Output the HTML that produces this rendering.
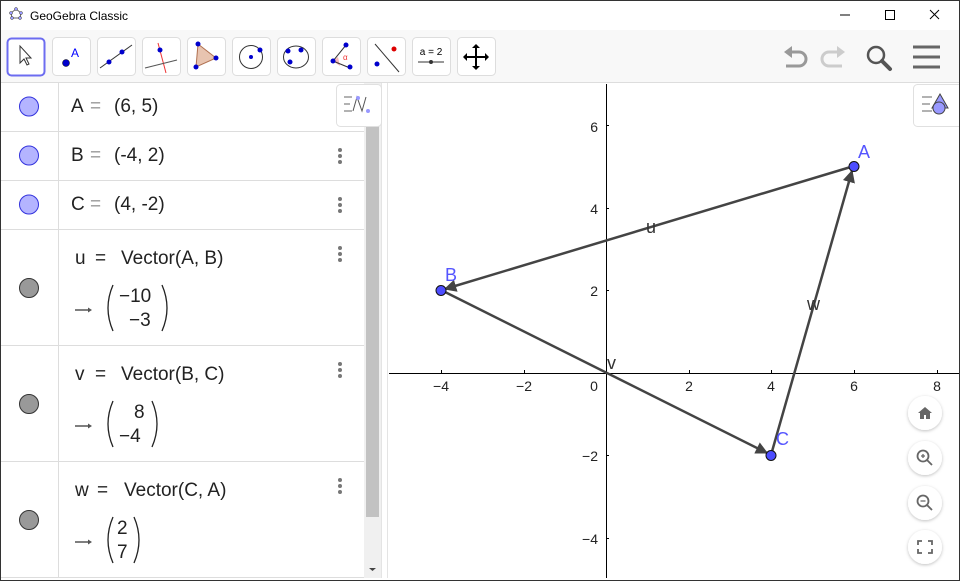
<!DOCTYPE html>
<html><head><meta charset="utf-8"><style>
body{margin:0;width:960px;height:581px;overflow:hidden;background:#fff;font-family:"Liberation Sans",sans-serif}
svg{display:block}
</style></head><body>
<svg width="960" height="581" viewBox="0 0 960 581" font-family="Liberation Sans, sans-serif">
<defs>
<marker id="ar" viewBox="0 0 10 10" refX="9" refY="5" markerWidth="5" markerHeight="5" orient="auto"><path d="M0 0L10 5L0 10z" fill="#444"/></marker>
<filter id="sh" x="-30%" y="-30%" width="160%" height="160%"><feDropShadow dx="0" dy="1" stdDeviation="1.5" flood-opacity="0.25"/></filter>
</defs>
<rect x="0" y="0" width="960" height="30" fill="#fff"/>
<path d="M11 13l5-4 5 4-1 5h-8z" fill="none" stroke="#666" stroke-width="1"/>
<g fill="#99f" stroke="#333" stroke-width=".5"><circle cx="11" cy="13" r="1.5"/><circle cx="16" cy="9" r="1.5"/><circle cx="21" cy="13" r="1.5"/><circle cx="20" cy="18" r="1.5"/><circle cx="12" cy="18" r="1.5"/></g>
<text x="30" y="20" font-size="12" fill="#000">GeoGebra Classic</text>
<path d="M840 15h10" stroke="#000"/>
<rect x="885.5" y="10.5" width="9" height="9" fill="none" stroke="#000"/>
<path d="M930 10l9 9M939 10l-9 9" stroke="#000"/>
<rect x="1" y="30" width="958" height="52" fill="#f8f8f8"/>
<path d="M0 82.5h960" stroke="#ddd"/>
<g fill="#fff" stroke="#ddd">
<rect x="52.5" y="37.5" width="38" height="38" rx="4"/><rect x="97.5" y="37.5" width="38" height="38" rx="4"/><rect x="142.5" y="37.5" width="38" height="38" rx="4"/><rect x="187.5" y="37.5" width="38" height="38" rx="4"/><rect x="232.5" y="37.5" width="38" height="38" rx="4"/><rect x="277.5" y="37.5" width="38" height="38" rx="4"/><rect x="322.5" y="37.5" width="38" height="38" rx="4"/><rect x="367.5" y="37.5" width="38" height="38" rx="4"/><rect x="412.5" y="37.5" width="38" height="38" rx="4"/><rect x="457.5" y="37.5" width="38" height="38" rx="4"/>
</g>
<rect x="7.5" y="38.5" width="37" height="37" rx="4" fill="#fff" stroke="#6c6cf0" stroke-width="2"/>
<path d="M20 46v17l4-4 3 6 2-1-3-6h5z" fill="#fff" stroke="#333"/>
<circle cx="66" cy="63" r="3.5" fill="#00c" stroke="#000" stroke-width=".5"/><text x="71" y="57" font-size="12" fill="#00f">A</text>
<path d="M100 68l32-23" stroke="#333"/><circle cx="109" cy="62" r="2.5" fill="#00c"/><circle cx="122" cy="52" r="2.5" fill="#00c"/>
<path d="M158 43l8 30" stroke="#e33"/><path d="M145 68l32-8" stroke="#555"/><circle cx="160" cy="50" r="2.5" fill="#00c"/>
<path d="M198 44l18 14-20 9z" fill="#e8c4b0" stroke="#b07050"/><circle cx="198" cy="44" r="2.5" fill="#00c"/><circle cx="216" cy="58" r="2.5" fill="#00c"/><circle cx="196" cy="67" r="2.5" fill="#00c"/>
<circle cx="251" cy="57" r="11.5" fill="none" stroke="#333"/><circle cx="251" cy="57" r="2" fill="#00c"/><circle cx="260" cy="50" r="2.5" fill="#00c"/>
<ellipse cx="296" cy="57" rx="12.5" ry="11" fill="none" stroke="#333"/><circle cx="288" cy="51" r="2.5" fill="#00c"/><circle cx="301" cy="50" r="2.5" fill="#00c"/><circle cx="290" cy="62" r="2.5" fill="#00c"/>
<path d="M333 61l7 5-2-9z" fill="#f8b8b8"/><path d="M346 45l-13 16 17 7" fill="none" stroke="#333"/><circle cx="346" cy="45" r="2.5" fill="#00c"/><circle cx="333" cy="61" r="2.5" fill="#00c"/><circle cx="350" cy="67" r="2.5" fill="#00c"/><text x="343" y="60" font-size="8" fill="#e33">α</text>
<path d="M375 44l24 28" stroke="#333"/><circle cx="394" cy="49" r="2.5" fill="#d00"/><circle cx="377" cy="64" r="2.5" fill="#00c"/>
<text x="431" y="55" font-size="10" text-anchor="middle" fill="#000">a = 2</text><path d="M418 62h26" stroke="#333"/><circle cx="431" cy="62" r="2" fill="#333"/>
<path d="M476 46v22M465 57h22" stroke="#000" stroke-width="2"/><path d="M476 44l-4 4h8zM476 70l-4-4h8zM463 57l4-4v8zM489 57l-4-4v8z" fill="#000"/>
<path d="M787 52h12a7 7 0 0 1 0 14h-13" fill="none" stroke="#999" stroke-width="3"/><path d="M784 52l8-6v12z" fill="#999"/>
<path d="M841 52h-12a7 7 0 0 0 0 14h13" fill="none" stroke="#ccc" stroke-width="3"/><path d="M845 52l-8-6v12z" fill="#ccc"/>
<circle cx="876" cy="55" r="8" fill="none" stroke="#555" stroke-width="2.5"/><path d="M882 61l8 8" stroke="#555" stroke-width="4" stroke-linecap="round"/>
<path d="M913 47h27M913 57h27M913 67h27" stroke="#666" stroke-width="3"/>
<rect x="0" y="83" width="388" height="498" fill="#fff"/>
<path d="M58.5 83v495" stroke="#ddd"/>
<g stroke="#ddd"><path d="M0 131.5h364M0 180.5h364M0 229.5h364M0 345.5h364M0 461.5h364M0 577.5h364"/></g>
<rect x="364" y="83" width="17" height="495" fill="#f0f0f0"/><rect x="366" y="125" width="13" height="392" fill="#c2c2c2"/>
<path d="M369 568h7l-3.5 3z" fill="#444"/>
<path d="M381.5 83v495M387.5 83v495" stroke="#e4e4e4"/>
<rect x="336.5" y="84.5" width="45" height="42" rx="4" fill="#fff" stroke="#e0e0e0"/>
<path d="M344 97h8M344 104h6M344 111h8" stroke="#999" stroke-width="1.5"/><path d="M353 111l4-14 5 14 4-14" fill="none" stroke="#555"/><circle cx="358" cy="98" r="2" fill="#99f"/><circle cx="368" cy="111" r="2" fill="#99f"/>
<g fill="#b4b4ff" stroke="#3333dd"><circle cx="29" cy="106.5" r="9.5"/><circle cx="29" cy="155.5" r="9.5"/><circle cx="29" cy="204.5" r="9.5"/></g>
<g fill="#999" stroke="#333"><circle cx="29" cy="288" r="9.5"/><circle cx="29" cy="404" r="9.5"/><circle cx="29" cy="520" r="9.5"/></g>
<g font-size="19" fill="#222">
<text x="71" y="112">A</text><text x="90" y="112" fill="#999">=</text><text x="114" y="112">(6, 5)</text>
<text x="71" y="161">B</text><text x="90" y="161" fill="#999">=</text><text x="114" y="161">(-4, 2)</text>
<text x="71" y="210">C</text><text x="90" y="210" fill="#999">=</text><text x="114" y="210">(4, -2)</text>
<text x="75" y="264">u</text><text x="95" y="264">=</text><text x="121" y="264">Vector(A, B)</text>
<text x="75" y="380">v</text><text x="95" y="380">=</text><text x="121" y="380">Vector(B, C)</text>
<text x="75" y="496">w</text><text x="97" y="496">=</text><text x="124" y="496">Vector(C, A)</text>
<text x="119" y="302">−10</text><text x="129" y="326">−3</text>
<text x="134" y="418">8</text><text x="119" y="442">−4</text>
<text x="117" y="534">2</text><text x="117" y="558">7</text>
</g>
<g fill="none" stroke="#222" stroke-width="1.3">
<path d="M113 285q-10 23 0 46M162 285q10 23 0 46"/>
<path d="M113 401q-10 23 0 46M152 401q10 23 0 46"/>
<path d="M113 517q-10 23 0 46M134 517q10 23 0 46"/>
</g>
<g stroke="#555" stroke-width="1.5"><path d="M75 310h15M75 426h15M75 542h15"/></g>
<g fill="#555"><path d="M92 310l-4-2.5v5z"/><path d="M92 426l-4-2.5v5z"/><path d="M92 542l-4-2.5v5z"/></g>
<g fill="#777"><circle cx="340" cy="150" r="2"/><circle cx="340" cy="156" r="2"/><circle cx="340" cy="162" r="2"/><circle cx="340" cy="199" r="2"/><circle cx="340" cy="205" r="2"/><circle cx="340" cy="211" r="2"/><circle cx="340" cy="248" r="2"/><circle cx="340" cy="254" r="2"/><circle cx="340" cy="260" r="2"/><circle cx="340" cy="364" r="2"/><circle cx="340" cy="370" r="2"/><circle cx="340" cy="376" r="2"/><circle cx="340" cy="480" r="2"/><circle cx="340" cy="486" r="2"/><circle cx="340" cy="492" r="2"/></g>
<path d="M389 373.5h571M606.5 84v494" stroke="#000"/>
<g stroke="#000"><path d="M441.5 370v3M524.5 370v3M689.5 370v3M771.5 370v3M854.5 370v3M937.5 370v3M606 125.5h3M606 208.5h3M606 290.5h3M606 455.5h3M606 538.5h3"/></g>
<g font-size="14" fill="#222" text-anchor="middle">
<text x="441" y="391">−4</text><text x="524" y="391">−2</text><text x="594" y="391">0</text><text x="689" y="391">2</text><text x="771" y="391">4</text><text x="854" y="391">6</text><text x="937" y="391">8</text>
</g>
<g font-size="14" fill="#222" text-anchor="end">
<text x="598" y="132">6</text><text x="598" y="214">4</text><text x="598" y="296">2</text><text x="598" y="461">−2</text><text x="598" y="544">−4</text>
</g>
<g stroke="#444" stroke-width="2.5" marker-end="url(#ar)">
<path d="M854 166L445 289"/><path d="M441 290L767 453"/><path d="M771 455L852 171"/>
</g>
<g font-size="18" fill="#333"><text x="646" y="233">u</text><text x="607" y="369">v</text><text x="807" y="310">w</text></g>
<g fill="#4d4dff" stroke="#111" stroke-width="1"><circle cx="854" cy="166.5" r="5"/><circle cx="441" cy="290.5" r="5"/><circle cx="771" cy="455.5" r="5"/></g>
<g font-size="18" fill="#5555ff"><text x="858" y="158">A</text><text x="445" y="281">B</text><text x="776" y="445">C</text></g>
<rect x="913.5" y="84.5" width="50" height="42" rx="4" fill="#fff" stroke="#e0e0e0"/>
<path d="M922 97h10M922 104h8M922 111h10" stroke="#999" stroke-width="1.5"/><path d="M940 94l8 14h-16z" fill="#99f" stroke="#444"/><circle cx="939" cy="108" r="6" fill="#99f" stroke="#444"/>
<g fill="#fff" filter="url(#sh)"><circle cx="925" cy="413" r="17"/><circle cx="925" cy="458" r="17"/><circle cx="925" cy="503" r="17"/><circle cx="925" cy="547" r="17"/></g>
<path d="M918 413l7-6 7 6h-2v6h-4v-4h-2v4h-4v-6z" fill="#666"/>
<g fill="none" stroke="#666" stroke-width="1.8"><circle cx="923" cy="456" r="5.5"/><path d="M927 460l5 5"/><circle cx="923" cy="501" r="5.5"/><path d="M927 505l5 5"/><path d="M918 545v-4h4M928 541h4v4M932 549v4h-4M922 553h-4v-4"/></g>
<path d="M921 456h4M923 454v4M920.5 501h5" stroke="#666" stroke-width="1.3"/>
<rect x="0.5" y="0.5" width="959" height="580" fill="none" stroke="#333"/>
</svg>
</body></html>
